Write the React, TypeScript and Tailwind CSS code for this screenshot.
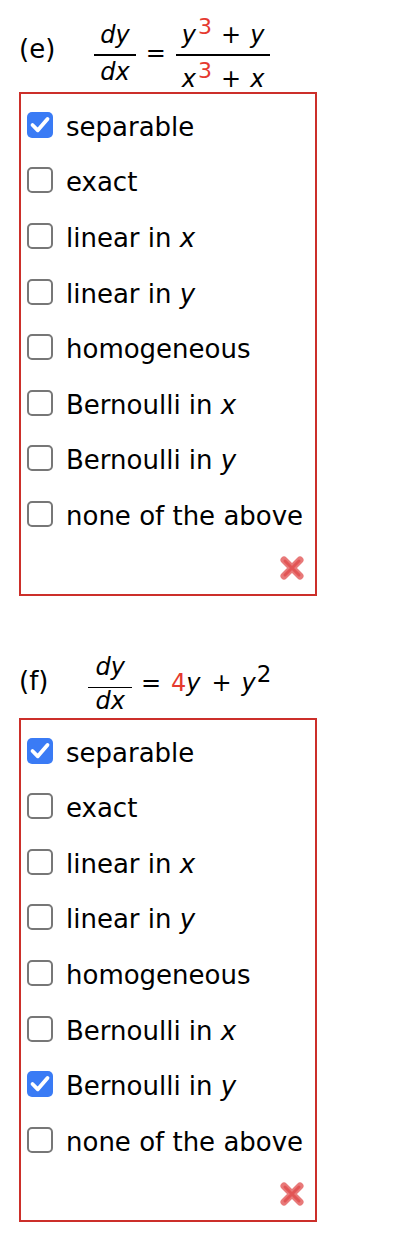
import type { ReactNode } from 'react';

// Two ODE classification questions, each a red-bordered answer box of checkboxes.

const RED_NUM = 'text-[#e53a2f]';

type Choice = { label: ReactNode; checked: boolean };

const v = (s: string) => <span className="italic">{s}</span>;

const choicesE: Choice[] = [
  { label: 'separable', checked: true },
  { label: 'exact', checked: false },
  { label: <>linear in {v('x')}</>, checked: false },
  { label: <>linear in {v('y')}</>, checked: false },
  { label: 'homogeneous', checked: false },
  { label: <>Bernoulli in {v('x')}</>, checked: false },
  { label: <>Bernoulli in {v('y')}</>, checked: false },
  { label: 'none of the above', checked: false },
];

const choicesF: Choice[] = choicesE.map((c, i) => ({ ...c, checked: i === 0 || i === 6 }));

function Checkbox({ checked }: { checked: boolean }) {
  if (checked) {
    return (
      <span className="flex h-[26px] w-[26px] shrink-0 rounded-[5px] bg-[#3a7bf5]">
        <svg width="26" height="26" viewBox="0 0 26 26">
          <path d="M5.5 13 L10.8 18.3 L20.5 7" fill="none" stroke="#fff" strokeWidth="3.8" strokeLinecap="round" strokeLinejoin="round" />
        </svg>
      </span>
    );
  }
  return <span className="h-[26px] w-[26px] shrink-0 rounded-[5px] border-2 border-[#777777] bg-white" />;
}

function WrongMark() {
  return (
    <svg width="28" height="28" viewBox="0 0 28 28">
      <path d="M6 6 L22 22 M22 6 L6 22" stroke="#e46262" strokeWidth="7" strokeLinecap="round" opacity="0.85" />
      <path d="M7 7 L21 21 M21 7 L7 21" stroke="#e25555" strokeWidth="3" strokeLinecap="round" />
    </svg>
  );
}

function AnswerBox({ choices }: { choices: Choice[] }) {
  return (
    <div className="ml-[19px] w-[298px] border-2 border-[#cc2f2a] pt-[3px]">
      {choices.map((c, i) => (
        <div key={i} className="flex h-[55.6px] items-center gap-[13px] pl-[6px] text-[26px] leading-none">
          <Checkbox checked={c.checked} />
          <span className="mt-[4px] whitespace-nowrap">{c.label}</span>
        </div>
      ))}
      <div className="flex h-[52px] items-center justify-end pr-[9px]">
        <WrongMark />
      </div>
    </div>
  );
}

function Sup({ children }: { children: ReactNode }) {
  return <span className={`relative -top-[9px] ml-[2px] text-[22px] not-italic ${RED_NUM}`}>{children}</span>;
}

export default function App() {
  return (
    <div className="min-h-[1246px] w-[418px] bg-white font-['DejaVu_Sans',sans-serif] text-black">
      {/* (e) dy/dx = (y^3 + y) / (x^3 + x) */}
      <div className="flex h-[92px] items-start pl-[19px]">
        <span className="mt-[36px] text-[26px] leading-[26px]">(e)</span>
        <div className="ml-[39px] mt-[23px] flex flex-col text-[24px]">
          <div className="h-[24px] px-[6px] text-center leading-[24px] italic">dy</div>
          <div className="mt-[7px] h-[1.5px] bg-black" />
          <div className="pt-[4px] px-[6px] text-center leading-[24px] italic">dx</div>
        </div>
        <span className="ml-[10px] mt-[41px] text-[24px] leading-[24px]">=</span>
        <div className="ml-[10px] mt-[23px] flex flex-col text-[24px]">
          <div className="h-[24px] whitespace-nowrap px-[6px] leading-[24px]">
            {v('y')}
            <Sup>3</Sup>
            <span className="ml-[9px]">+</span>
            <span className="ml-[9px]">{v('y')}</span>
          </div>
          <div className="mt-[7px] h-[1.5px] bg-black" />
          <div className="whitespace-nowrap px-[6px] pt-[11px] leading-[24px]">
            {v('x')}
            <Sup>3</Sup>
            <span className="ml-[9px]">+</span>
            <span className="ml-[9px]">{v('x')}</span>
          </div>
        </div>
      </div>
      <AnswerBox choices={choicesE} />

      {/* (f) dy/dx = 4y + y^2 */}
      <div className="flex h-[122px] items-start pl-[19px]">
        <span className="mt-[72px] text-[26px] leading-[26px]">(f)</span>
        <div className="ml-[40px] mt-[59px] flex flex-col text-[24px]">
          <div className="h-[24px] px-[7px] text-center leading-[24px] italic">dy</div>
          <div className="mt-[8px] h-[1.5px] bg-black" />
          <div className="pt-[1px] px-[7px] text-center leading-[24px] italic">dx</div>
        </div>
        <div className="ml-[9px] mt-[75px] whitespace-nowrap text-[24px] leading-[24px]">
          <span>=</span>
          <span className={`ml-[10px] ${RED_NUM}`}>4</span>
          {v('y')}
          <span className="ml-[11px]">+</span>
          <span className="ml-[10px]">{v('y')}</span>
          <span className="relative -top-[9px] ml-[1px] text-[23px]">2</span>
        </div>
      </div>
      <AnswerBox choices={choicesF} />
    </div>
  );
}
